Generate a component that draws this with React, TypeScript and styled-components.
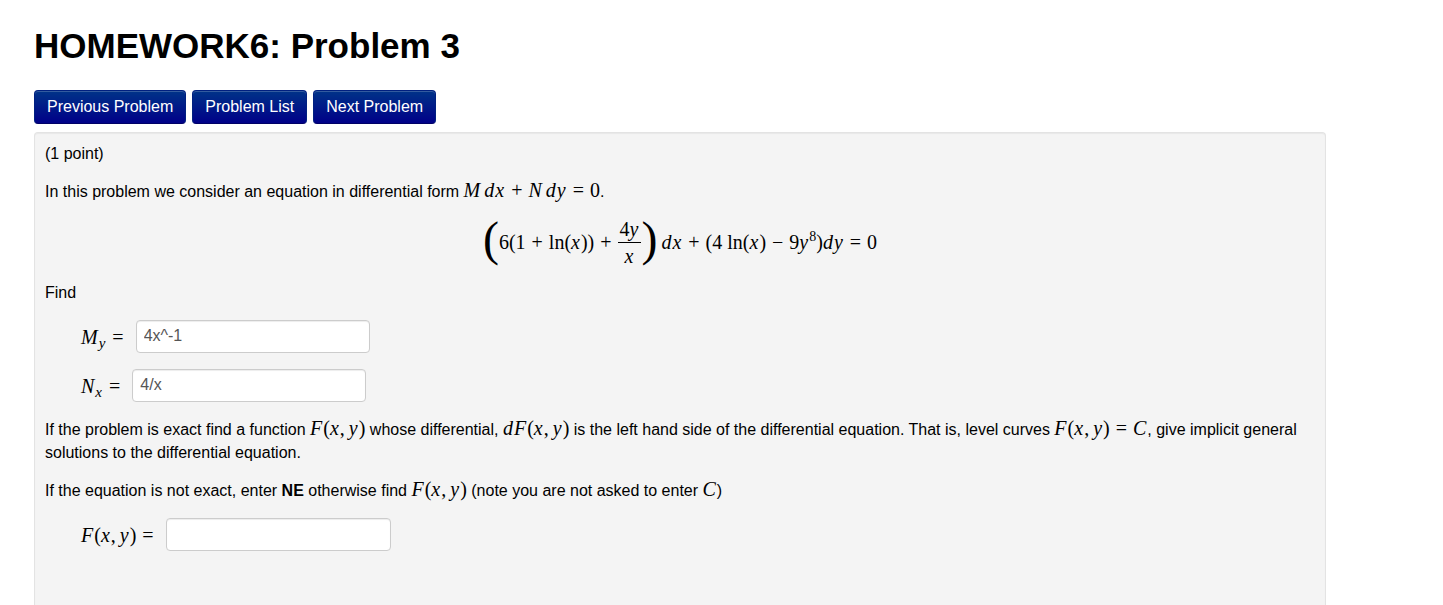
import React, { useState } from "react";
import styled, { createGlobalStyle } from "styled-components";

const GlobalStyle = createGlobalStyle`
  * { box-sizing: border-box; }
  body {
    margin: 0;
    background: #fff;
    color: #000;
    font-family: "Liberation Sans", Arial, Helvetica, sans-serif;
    font-size: 16px;
    line-height: 23px;
  }
`;

const Page = styled.main`
  display: flex;
  flex-direction: column;
  min-height: 100vh;
  padding: 26px 117px 0 34px;
`;

const Title = styled.h1`
  margin: 0 0 24px;
  font-size: 35px;
  line-height: 40px;
  font-weight: bold;
`;

const ButtonBar = styled.nav`
  display: flex;
  gap: 6px;
  margin-bottom: 8px;
`;

const NavButton = styled.button`
  height: 34px;
  padding: 0 12px 2px;
  border: 1px solid #002080;
  border-bottom-color: #000066;
  border-radius: 4px;
  background: linear-gradient(#003388, #000088);
  box-shadow: inset 0 1px 0 rgba(255, 255, 255, 0.2);
  color: #fff;
  font: inherit;
  cursor: pointer;
`;

const Panel = styled.section`
  flex: 1;
  padding: 9px 10px 0;
  border: 1px solid #e3e3e3;
  border-bottom: 0;
  border-radius: 4px 4px 0 0;
  background: #f4f4f4;
  box-shadow: inset 0 1px 1px rgba(0, 0, 0, 0.05);
`;

const Paragraph = styled.p`
  margin: 0 0 15px;
`;

const MathText = styled.span`
  font-family: "Liberation Serif", "Times New Roman", serif;
  font-size: 20px;
  line-height: 20px;
  white-space: nowrap;
`;

const Letter = styled.i<{ $spaced?: boolean }>`
  padding: 0 1px 0 0;
  margin-right: ${(p) => (p.$spaced ? 3 : 0)}px;
`;

const Operator = styled.span`
  margin: 0 6px;
`;

const Comma = styled.span`
  margin-right: 4px;
`;

const Index = styled.sub`
  font-size: 15px;
  line-height: 0;
  vertical-align: -4px;
`;

const Power = styled.sup`
  font-size: 14px;
  line-height: 0;
  vertical-align: 8px;
`;

const Equation = styled(MathText)`
  display: flex;
  align-items: center;
  justify-content: center;
  height: 48px;
  margin-bottom: 15px;
`;

const TallParen = styled.span`
  font-size: 48px;
  line-height: 48px;
  height: 54px;
`;

const Fraction = styled.span`
  display: inline-flex;
  flex-direction: column;
  align-items: center;
  line-height: 26px;
`;

const Numerator = styled.span`
  border-bottom: 1px solid #000;
  padding: 0 2px;
`;

const Differential = styled.span`
  margin-left: 4px;
`;

const AnswerRow = styled.div`
  display: flex;
  align-items: center;
  height: 33px;
  margin: 16px 0 16px 36px;
`;

const AnswerInput = styled.input<{ $width: number }>`
  width: ${(p) => p.$width}px;
  height: 33px;
  margin-left: 6px;
  padding: 0 7px 1px;
  border: 1px solid #ccc;
  border-radius: 4px;
  background: #fff;
  box-shadow: inset 0 1px 1px rgba(0, 0, 0, 0.075);
  color: #555;
  font: inherit;
`;

const FofXY = () => (
  <>
    <Letter>F</Letter>(<Letter>x</Letter>
    <Comma>,</Comma>
    <Letter>y</Letter>)
  </>
);

interface AnswerProps {
  id: string;
  initial: string;
  width: number;
  children: React.ReactNode;
}

const Answer = ({ id, initial, width, children }: AnswerProps) => {
  const [value, setValue] = useState(initial);
  return (
    <AnswerRow>
      <MathText as="label" htmlFor={id}>
        {children}
        <Operator>=</Operator>
      </MathText>
      <AnswerInput
        id={id}
        type="text"
        $width={width}
        value={value}
        onChange={(e) => setValue(e.target.value)}
      />
    </AnswerRow>
  );
};

export default function App() {
  return (
    <>
      <GlobalStyle />
      <Page>
        <Title>HOMEWORK6: Problem 3</Title>
        <ButtonBar>
          <NavButton type="button">Previous Problem</NavButton>
          <NavButton type="button">Problem List</NavButton>
          <NavButton type="button">Next Problem</NavButton>
        </ButtonBar>
        <Panel>
          <Paragraph>(1 point)</Paragraph>
          <Paragraph>
            In this problem we consider an equation in differential form{" "}
            <MathText>
              <Letter $spaced>M</Letter>
              <Letter>d</Letter>
              <Letter>x</Letter>
              <Operator>+</Operator>
              <Letter $spaced>N</Letter>
              <Letter>d</Letter>
              <Letter>y</Letter>
              <Operator>=</Operator>0
            </MathText>
            .
          </Paragraph>
          <Equation>
            <TallParen>(</TallParen>
            <span>
              6(1<Operator>+</Operator>ln(<Letter>x</Letter>))
              <Operator>+</Operator>
            </span>
            <Fraction>
              <Numerator>
                4<Letter>y</Letter>
              </Numerator>
              <Letter>x</Letter>
            </Fraction>
            <TallParen>)</TallParen>
            <Differential>
              <Letter>d</Letter>
              <Letter>x</Letter>
              <Operator>+</Operator>(4 ln(<Letter>x</Letter>)
              <Operator>−</Operator>9<Letter>y</Letter>
              <Power>8</Power>)<Letter>d</Letter>
              <Letter>y</Letter>
              <Operator>=</Operator>0
            </Differential>
          </Equation>
          <Paragraph>Find</Paragraph>
          <Answer id="answer-my" initial="4x^-1" width={234}>
            <Letter>M</Letter>
            <Index>
              <Letter>y</Letter>
            </Index>
          </Answer>
          <Answer id="answer-nx" initial="4/x" width={234}>
            <Letter>N</Letter>
            <Index>
              <Letter>x</Letter>
            </Index>
          </Answer>
          <Paragraph>
            If the problem is exact find a function{" "}
            <MathText>
              <FofXY />
            </MathText>{" "}
            whose differential,{" "}
            <MathText>
              <Letter>d</Letter>
              <FofXY />
            </MathText>{" "}
            is the left hand side of the differential equation. That is, level
            curves{" "}
            <MathText>
              <FofXY />
              <Operator>=</Operator>
              <Letter>C</Letter>
            </MathText>
            , give implicit general solutions to the differential equation.
          </Paragraph>
          <Paragraph>
            If the equation is not exact, enter <b>NE</b> otherwise find{" "}
            <MathText>
              <FofXY />
            </MathText>{" "}
            (note you are not asked to enter{" "}
            <MathText>
              <Letter>C</Letter>
            </MathText>
            )
          </Paragraph>
          <Answer id="answer-f" initial="" width={225}>
            <FofXY />
          </Answer>
        </Panel>
      </Page>
    </>
  );
}
